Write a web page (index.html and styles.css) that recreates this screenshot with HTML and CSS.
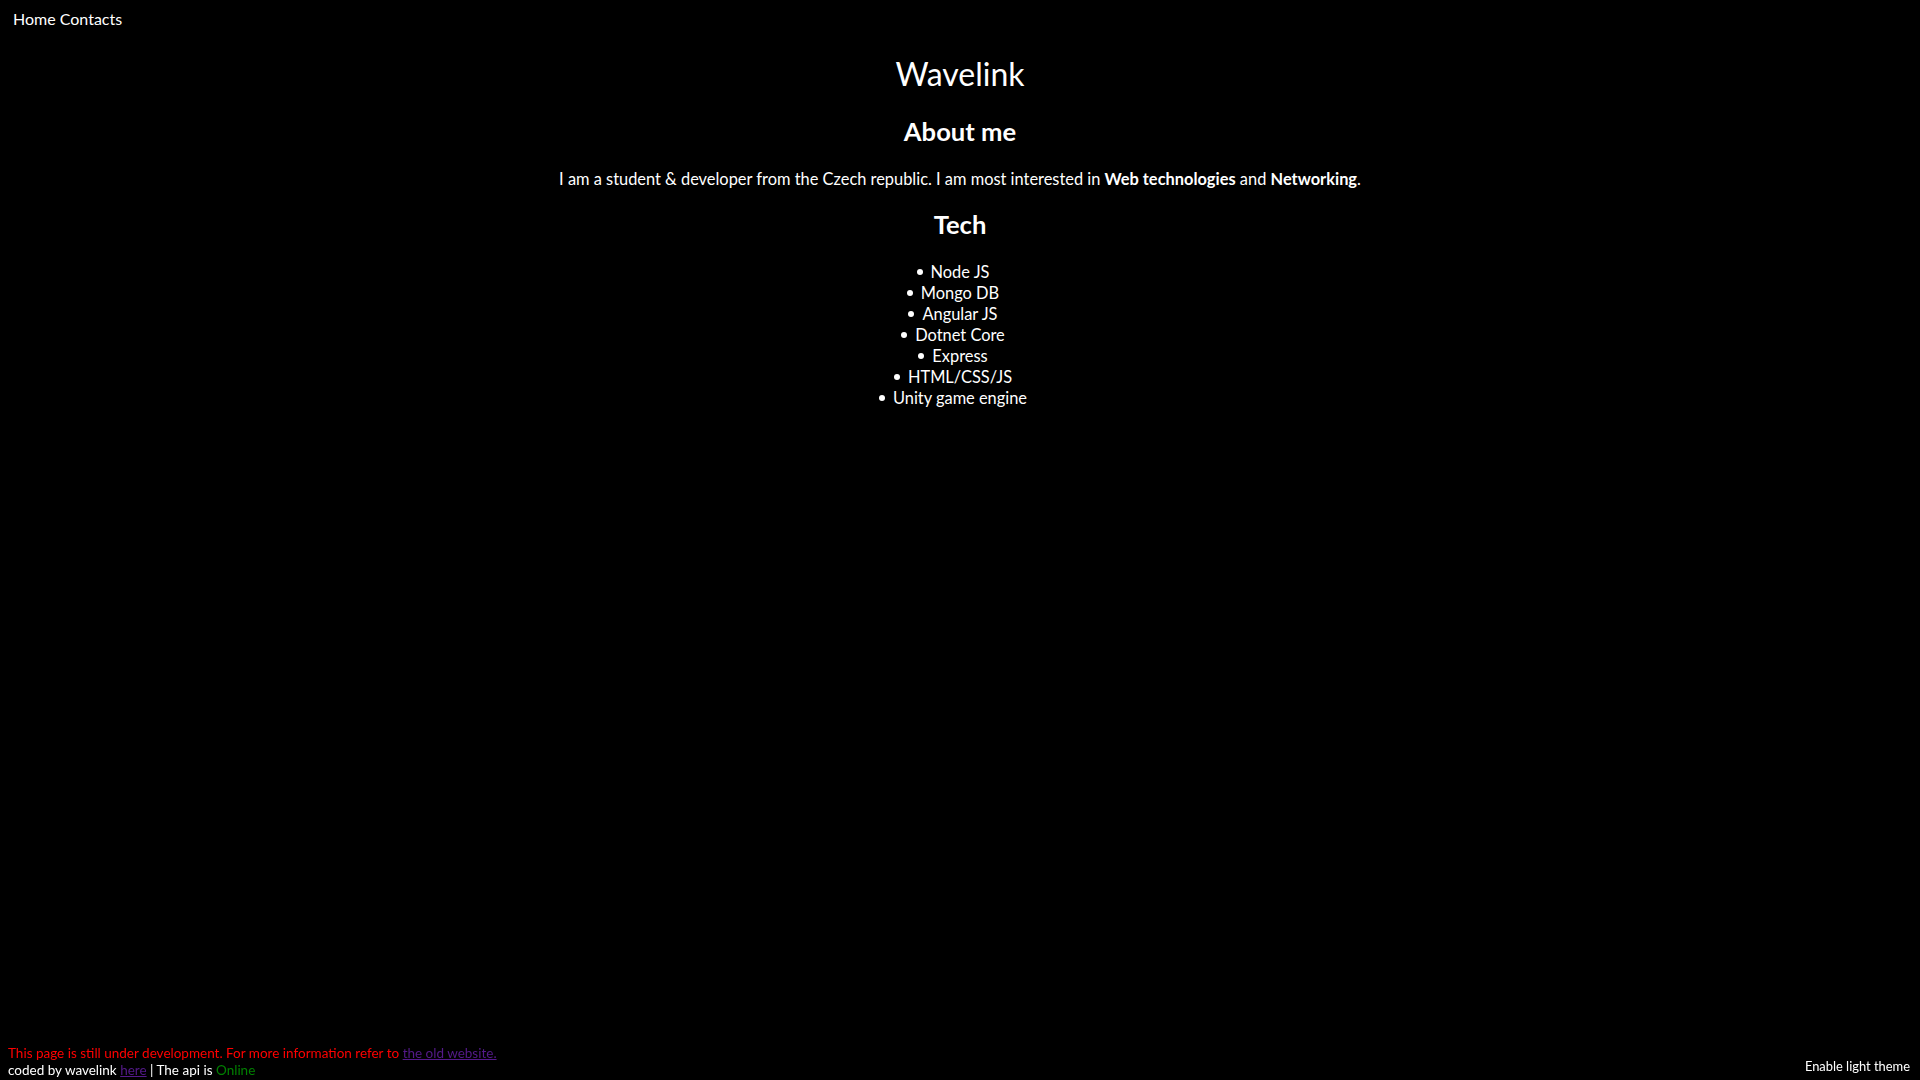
FILE: index.html
```html
<!DOCTYPE html>
<html lang="en">
<head>
<meta charset="utf-8">
<title>Wavelink</title>
<link rel="stylesheet" href="styles.css">
</head>
<body>
<nav class="nav">
  <a class="nav-link" href="#">Home</a>
  <a class="nav-link" href="#">Contacts</a>
</nav>
<main class="main">
  <h1 class="title">Wavelink</h1>
  <h2 class="heading">About me</h2>
  <p class="about">I am a student &amp; developer from the Czech republic. I am most interested in <b>Web technologies</b> and <b>Networking</b>.</p>
  <h2 class="heading">Tech</h2>
  <ul class="tech">
    <li><span class="item">Node JS</span></li>
    <li><span class="item">Mongo DB</span></li>
    <li><span class="item">Angular JS</span></li>
    <li><span class="item">Dotnet Core</span></li>
    <li><span class="item">Express</span></li>
    <li><span class="item">HTML/CSS/JS</span></li>
    <li><span class="item">Unity game engine</span></li>
  </ul>
</main>
<footer class="footer">
  <div class="warn">This page is still under development. For more information refer to <a class="visited" href="#">the old website.</a></div>
  <div class="credits">coded by wavelink <a class="visited" href="#">here</a> | The api is <span class="online">Online</span></div>
</footer>
<button class="theme-btn" type="button">Enable light theme</button>
</body>
</html>
```
FILE: styles.css
```css
html, body {
  background: #000;
  color: #fff;
}
body {
  margin: 8px;
  font-family: Lato, "Open Sans", sans-serif;
  font-size: 16.4px;
  line-height: 1.3;
}
.nav {
  padding-top: 1px;
  padding-left: 5px;
  font-size: 16px;
}
.nav-link {
  color: #fff;
  text-decoration: none;
}
.main {
  text-align: center;
}
.title {
  font-size: 32px;
  font-weight: normal;
  line-height: 1.33;
  margin: 23px 0 20.5px;
}
.heading {
  font-size: 25.6px;
  font-weight: bold;
  line-height: 1.25;
  margin: 19.92px 0;
}
.about {
  margin: 16px 0;
}
.tech {
  list-style: none;
  padding: 0;
  margin: 16px 0;
}
.tech li {
  text-align: center;
  line-height: 21px;
}
.item {
  position: relative;
}
.item::before {
  content: "";
  position: absolute;
  right: calc(100% + 8px);
  top: 50%;
  width: 6px;
  height: 6px;
  margin-top: -2px;
  border-radius: 50%;
  background: #fff;
}
.footer {
  position: fixed;
  left: 8px;
  bottom: 2px;
  font-size: 13.5px;
  line-height: 16.5px;
}
.warn {
  color: #ff0000;
}
.credits {
  color: #fff;
}
.visited {
  color: #551a8b;
}
.online {
  color: #008000;
}
.theme-btn {
  position: fixed;
  right: 10px;
  bottom: 6px;
  background: transparent;
  border: none;
  color: #fff;
  font-family: Lato, "Open Sans", sans-serif;
  font-size: 12.9px;
  padding: 0;
}
```
